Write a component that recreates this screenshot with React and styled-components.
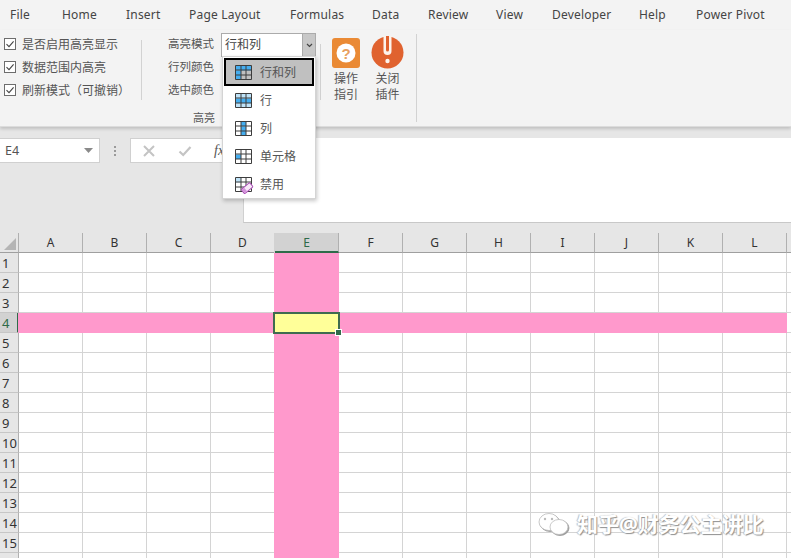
import React from "react";
import styled, { createGlobalStyle } from "styled-components";

const UI_FONT = `"Noto Sans", "Noto Sans CJK SC", sans-serif`;

const GlobalStyle = createGlobalStyle`
  html, body { margin: 0; padding: 0; background: #fff; }
  body { width: 791px; height: 558px; overflow: hidden; font-family: ${UI_FONT}; color: #444; }
  * { box-sizing: border-box; }
`;

const Page = styled.div`
  position: relative;
  width: 791px;
  height: 558px;
  overflow: hidden;
`;

const MenuBar = styled.div`
  display: flex;
  height: 30px;
  background: #f3f3f3;
  padding: 5px 0 0 10px;
  font-size: 12px;
  line-height: 20px;
  letter-spacing: 0.2px;
  color: #444;
`;

const MenuLabel = styled.div`
  width: ${(p) => p.$w}px;
  white-space: nowrap;
`;

const Ribbon = styled.div`
  display: flex;
  height: 97px;
  background: #f3f3f3;
  border-bottom: 1px solid #dcdcdc;
  box-shadow: 0 2px 3px rgba(0, 0, 0, 0.16);
  position: relative;
  z-index: 1;
`;

const CheckColumn = styled.div`
  display: flex;
  flex-direction: column;
  gap: 5px;
  width: 141px;
  padding: 5px 0 0 4px;
`;

const CheckRow = styled.div`
  display: flex;
  align-items: center;
  gap: 6px;
  height: 18px;
  font-size: 12px;
  color: #555;
  white-space: nowrap;
`;

const CheckBox = styled.span`
  display: flex;
  align-items: center;
  justify-content: center;
  width: 12px;
  height: 12px;
  background: #fff;
  border: 1px solid #6d6d6d;
`;

const Divider = styled.div`
  flex: none;
  width: 1px;
  margin-top: ${(p) => p.$top}px;
  height: ${(p) => p.$height}px;
  background: #d2d2d2;
`;

const HighlightGroup = styled.div`
  display: flex;
  flex-direction: column;
  width: 178px;
  padding: 3px 0 0 26px;
`;

const FieldLabels = styled.div`
  display: flex;
  flex-direction: column;
  gap: 5px;
  padding-top: 2px;
  width: 53px;
`;

const FieldLabel = styled.div`
  height: 18px;
  font-size: 11.5px;
  line-height: 18px;
  color: #555;
  white-space: nowrap;
`;

const FieldRow = styled.div`
  display: flex;
  height: 69px;
`;

const SelectBox = styled.div`
  display: flex;
  width: 95px;
  height: 24px;
  background: #fff;
  border: 1px solid #ababab;
  font-size: 12px;
  line-height: 21px;
  color: #444;
  padding-left: 3px;
`;

const SelectValue = styled.div`
  flex: 1;
`;

const SelectArrow = styled.div`
  display: flex;
  align-items: center;
  justify-content: center;
  width: 13px;
  background: #c8c8c8;
  border-left: 1px solid #ababab;
`;

const GroupTitle = styled.div`
  font-size: 11px;
  line-height: 16px;
  padding-left: 25px;
  margin-top: 9px;
  color: #555;
`;

const ToolGroup = styled.div`
  display: flex;
  width: 95px;
  padding: 6px 0 0 11px;
  gap: 11px;
`;

const ToolButton = styled.div`
  display: flex;
  flex-direction: column;
  align-items: center;
  width: ${(p) => p.$w}px;
`;

const ToolIcon = styled.div`
  height: 33px;
  display: flex;
  align-items: center;
  margin-bottom: 2px;
`;

const ToolLabel = styled.div`
  font-size: 12px;
  line-height: 16px;
  text-align: center;
  color: #555;
`;

const DropMenu = styled.div`
  position: absolute;
  left: 222px;
  top: 56px;
  width: 94px;
  height: 143px;
  padding: 1px;
  background: #fff;
  border: 1px solid #d4d4d4;
  box-shadow: 1px 2px 4px rgba(0, 0, 0, 0.22);
  z-index: 5;
`;

const DropItem = styled.div`
  display: flex;
  align-items: center;
  gap: 8px;
  height: 28px;
  padding-left: ${(p) => (p.$active ? 9 : 11)}px;
  font-size: 12px;
  color: #555;
  background: ${(p) => (p.$active ? "#c0c0c0" : "transparent")};
  border: ${(p) => (p.$active ? "2px solid #000" : "none")};
`;

const FormulaArea = styled.div`
  display: flex;
  height: 106px;
  padding-top: 11px;
  background: #e6e6e6;
`;

const NameBox = styled.div`
  display: flex;
  align-items: center;
  justify-content: space-between;
  width: 100px;
  height: 25px;
  padding: 0 6px 0 5px;
  background: #fff;
  border: 1px solid #d0d0d0;
  border-left: none;
  font-size: 12.5px;
  color: #555;
`;

const GripDots = styled.div`
  display: flex;
  flex-direction: column;
  align-items: center;
  justify-content: center;
  gap: 2px;
  width: 30px;
  height: 25px;
`;

const GripDot = styled.span`
  width: 2px;
  height: 2px;
  background: #9a9a9a;
`;

const FormulaTools = styled.div`
  display: flex;
  align-items: center;
  width: 113px;
  height: 25px;
  padding-left: 11px;
  gap: 22px;
  background: #fff;
  border: 1px solid #d0d0d0;
  border-right: none;
`;

const FxMark = styled.span`
  font-family: "Liberation Serif", serif;
  font-style: italic;
  font-size: 14px;
  color: #555;
`;

const FormulaInput = styled.div`
  flex: 1;
  height: 85px;
  background: #fff;
  border-left: 1px solid #d0d0d0;
  border-bottom: 1px solid #c8c8c8;
`;

const SheetGrid = styled.div`
  display: grid;
  grid-template-columns: 19px repeat(13, 64px);
  grid-auto-rows: 20px;
  background: #fff;
`;

const CornerCell = styled.div`
  position: relative;
  height: 20px;
  background: #e6e6e6;
  border-bottom: 1px solid #9f9f9f;
  border-right: 1px solid #b0b0b0;

  &::after {
    content: "";
    position: absolute;
    right: 2px;
    bottom: 2px;
    border-style: solid;
    border-width: 0 0 12px 12px;
    border-color: transparent transparent #b5b5b5 transparent;
  }
`;

const ColHead = styled.div`
  height: 20px;
  display: flex;
  align-items: center;
  justify-content: center;
  font-size: 12px;
  color: ${(p) => (p.$selected ? "#2d6a48" : "#333")};
  background: ${(p) => (p.$selected ? "#d2d2d2" : "#e6e6e6")};
  border-right: 1px solid #b0b0b0;
  border-bottom: ${(p) => (p.$selected ? "2px solid #2f6b4a" : "1px solid #9f9f9f")};
  box-shadow: ${(p) => (p.$selected ? "-1px 0 0 #d2d2d2" : "none")};
`;

const RowHead = styled.div`
  display: flex;
  align-items: center;
  padding-left: 2px;
  font-size: 13px;
  color: ${(p) => (p.$selected ? "#2d6a48" : "#333")};
  background: ${(p) => (p.$selected ? "#d2d2d2" : "#e6e6e6")};
  border-bottom: 1px solid #c6c6c6;
  border-right: ${(p) => (p.$selected ? "2px solid #2f6b4a" : "1px solid #b0b0b0")};
`;

const Cell = styled.div`
  background: ${(p) => (p.$fill ? "#ff99cc" : "#fff")};
  border-right: 1px solid ${(p) => (p.$fill ? "#ff99cc" : "#d4d4d4")};
  border-bottom: 1px solid ${(p) => (p.$fill ? "#ff99cc" : "#d4d4d4")};
  box-shadow: ${(p) => (p.$fill ? "-1px 0 0 #ff99cc" : "none")};
`;

const ActiveCell = styled.div`
  position: relative;
  z-index: 2;
  margin: -1px 0 0 -2px;
  width: 67px;
  height: 22px;
  background: #ffff99;
  border: 2px solid #3f6b4f;

  &::after {
    content: "";
    position: absolute;
    right: -4px;
    bottom: -4px;
    width: 5px;
    height: 5px;
    background: #2f6b4a;
    border: 1px solid #fff;
  }
`;

const Watermark = styled.div`
  position: absolute;
  left: 537px;
  top: 511px;
  display: flex;
  align-items: center;
  gap: 7px;
  font-size: 21px;
  font-weight: 700;
  line-height: 26px;
  color: #fff;
  text-shadow: 1px 1px 1px #8f8f8f, -1px 0 1px #bcbcbc;
  white-space: nowrap;
  z-index: 3;
`;

const COLUMNS = ["A", "B", "C", "D", "E", "F", "G", "H", "I", "J", "K", "L", ""];
const ROWS = Array.from({ length: 16 }, (_, i) => i + 1);
const MENU = [
  ["File", 52], ["Home", 64], ["Insert", 63], ["Page Layout", 101], ["Formulas", 82],
  ["Data", 56], ["Review", 68], ["View", 56], ["Developer", 87], ["Help", 57], ["Power Pivot", 80],
];
const MODES = [
  { label: "行和列", mode: "both" },
  { label: "行", mode: "row" },
  { label: "列", mode: "col" },
  { label: "单元格", mode: "cell" },
  { label: "禁用", mode: "off" },
];

const Tick = () => (
  <svg width="10" height="10" viewBox="0 0 10 10">
    <path d="M1.5 5.2 L4 7.6 L8.6 2.4" fill="none" stroke="#444" strokeWidth="1.1" />
  </svg>
);

const ChevronDown = () => (
  <svg width="7" height="5" viewBox="0 0 7 5">
    <path d="M1 1 L3.5 3.5 L6 1" fill="none" stroke="#444" strokeWidth="1.2" />
  </svg>
);

// table glyph, which cells are blue depends on the mode
const cellColor = (mode, r, c) => {
  const blue = "#45aef0";
  const pale = "#bfe3f8";
  if (mode === "both") return r === 0 || c === 0 ? blue : null;
  if (mode === "row") return r === 1 ? blue : pale;
  if (mode === "col") return c === 1 ? blue : null;
  if (mode === "cell") return r === 1 && c === 0 ? blue : null;
  if (mode === "off") return r === 0 && c === 0 ? pale : null;
  return null;
};

const TableIcon = ({ mode }) => {
  const cells = [];
  for (let r = 0; r < 3; r++) {
    for (let c = 0; c < 3; c++) {
      const fill = cellColor(mode, r, c);
      if (fill) cells.push(<rect key={`${r}-${c}`} x={1 + c * 5} y={1 + r * 4.5} width="5" height="4.5" fill={fill} />);
    }
  }
  return (
    <svg width="17" height="15" viewBox="0 0 17 15" style={{ flex: "none", overflow: "visible" }}>
      {cells}
      <path d="M.5 .5 H16.5 V14.5 H.5 Z M.5 5 H16.5 M.5 10 H16.5 M6 .5 V14.5 M11 .5 V14.5" fill="none" stroke="#3d3d3d" strokeWidth="1" />
      {mode === "off" && (
        <g transform="rotate(-40 12 11)">
          <rect x="6.5" y="8.5" width="11" height="5.5" rx="1" fill="#f8e8f8" stroke="#a94fb5" strokeWidth="1" />
          <rect x="7" y="9" width="3" height="4.5" fill="#d391da" />
        </g>
      )}
    </svg>
  );
};

const HelpIcon = () => (
  <svg width="28" height="30" viewBox="0 0 28 30">
    <rect width="28" height="30" rx="3" fill="#ea8a35" />
    <circle cx="14" cy="15" r="9.5" fill="#fff" />
    <text x="14" y="20.5" textAnchor="middle" fontSize="15" fontWeight="700" fontFamily="Liberation Sans, sans-serif" fill="#e8a15f">?</text>
  </svg>
);

const CloseIcon = () => (
  <svg width="33" height="33" viewBox="0 0 33 33">
    <circle cx="16.5" cy="16.5" r="16" fill="#e0622f" />
    <path d="M16.5 0 V15" stroke="#fdf3ec" strokeWidth="8" strokeLinecap="round" />
    <path d="M16.5 0 V14" stroke="#e0622f" strokeWidth="3" strokeLinecap="round" />
    <circle cx="16.5" cy="25" r="2.2" fill="#fdf3ec" />
  </svg>
);

const CrossIcon = () => (
  <svg width="14" height="14" viewBox="0 0 14 14">
    <path d="M2 2 L12 12 M12 2 L2 12" stroke="#c4c4c4" strokeWidth="2" />
  </svg>
);

const CheckIcon = () => (
  <svg width="14" height="14" viewBox="0 0 14 14">
    <path d="M1.5 7.5 L5.2 11 L12.5 3" fill="none" stroke="#c4c4c4" strokeWidth="2.2" />
  </svg>
);

const WeChatMark = () => (
  <svg width="33" height="26" viewBox="0 0 33 26" style={{ filter: "drop-shadow(1px 1px 0.5px #999)" }}>
    <ellipse cx="12" cy="11" rx="10" ry="8.5" fill="#fff" stroke="#bbb" strokeWidth="0.8" />
    <ellipse cx="22" cy="16" rx="9" ry="7.5" fill="#fff" stroke="#bbb" strokeWidth="0.8" />
    <circle cx="8" cy="8" r="1.2" fill="#bbb" />
    <circle cx="15" cy="8" r="1.2" fill="#bbb" />
  </svg>
);

const App = () => (
  <Page>
    <GlobalStyle />
    <MenuBar>
      {MENU.map(([label, w]) => (
        <MenuLabel key={label} $w={w}>{label}</MenuLabel>
      ))}
    </MenuBar>

    <Ribbon>
      <CheckColumn>
        {["是否启用高亮显示", "数据范围内高亮", "刷新模式（可撤销）"].map((t) => (
          <CheckRow key={t}>
            <CheckBox><Tick /></CheckBox>
            {t}
          </CheckRow>
        ))}
      </CheckColumn>
      <Divider $top={10} $height={60} />
      <HighlightGroup>
        <FieldRow>
          <FieldLabels>
            <FieldLabel>高亮模式</FieldLabel>
            <FieldLabel>行列颜色</FieldLabel>
            <FieldLabel>选中颜色</FieldLabel>
          </FieldLabels>
          <SelectBox>
            <SelectValue>行和列</SelectValue>
            <SelectArrow><ChevronDown /></SelectArrow>
          </SelectBox>
        </FieldRow>
        <GroupTitle>高亮</GroupTitle>
      </HighlightGroup>
      <Divider $top={14} $height={56} />
      <ToolGroup>
        <ToolButton $w={28}>
          <ToolIcon><HelpIcon /></ToolIcon>
          <ToolLabel>操作<br />指引</ToolLabel>
        </ToolButton>
        <ToolButton $w={33}>
          <ToolIcon><CloseIcon /></ToolIcon>
          <ToolLabel>关闭<br />插件</ToolLabel>
        </ToolButton>
      </ToolGroup>
      <Divider $top={4} $height={88} />
    </Ribbon>

    <DropMenu>
      {MODES.map((m, i) => (
        <DropItem key={m.mode} $active={i === 0}>
          <TableIcon mode={m.mode} />
          {m.label}
        </DropItem>
      ))}
    </DropMenu>

    <FormulaArea>
      <NameBox>
        E4
        <svg width="9" height="5" viewBox="0 0 9 5"><path d="M0 0 H9 L4.5 5 Z" fill="#8a8a8a" /></svg>
      </NameBox>
      <GripDots><GripDot /><GripDot /><GripDot /></GripDots>
      <FormulaTools>
        <CrossIcon />
        <CheckIcon />
        <FxMark>fx</FxMark>
      </FormulaTools>
      <FormulaInput />
    </FormulaArea>

    <SheetGrid>
      <CornerCell />
      {COLUMNS.map((c, i) => (
        <ColHead key={i} $selected={c === "E"}>{c}</ColHead>
      ))}
      {ROWS.map((r) => (
        <React.Fragment key={r}>
          {/* row 16 sits below the fold, its number doesn't show */}
          <RowHead $selected={r === 4}>{r < 16 ? r : ""}</RowHead>
          {COLUMNS.map((c, i) => {
            if (r === 4 && c === "E") return <ActiveCell key={i} />;
            const pink = c === "E" || (r === 4 && c !== "");
            return <Cell key={i} $fill={pink} />;
          })}
        </React.Fragment>
      ))}
    </SheetGrid>

    <Watermark>
      <WeChatMark />
      知乎@财务公主讲比
    </Watermark>
  </Page>
);

export default App;
